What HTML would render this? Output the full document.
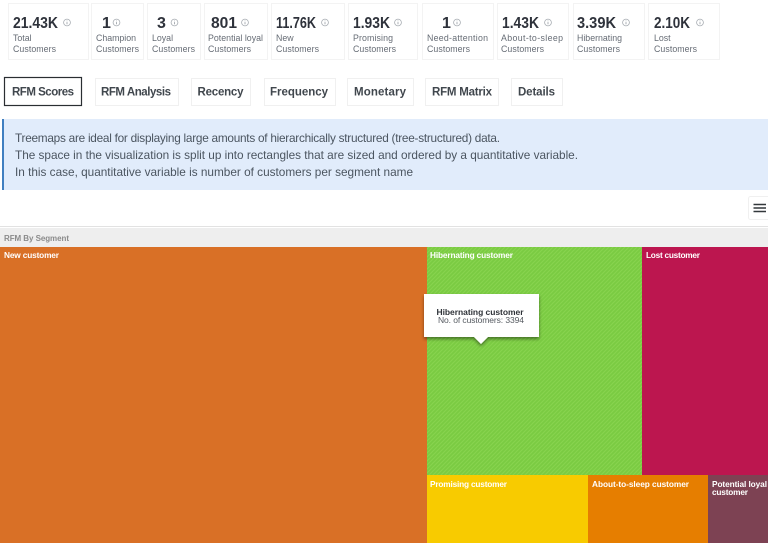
<!DOCTYPE html>
<html lang="en">
<head>
<meta charset="utf-8">
<title>RFM Scores</title>
<style>
html,body{margin:0;padding:0;background:#fff;width:768px;height:543px;overflow:hidden}
svg{display:block}
text{font-family:"Liberation Sans",sans-serif}
.card{fill:#fff;stroke:#f3f3f3;stroke-width:1}
.num{font-size:16px;font-weight:700;fill:#2f333b}
.lab{font-size:8.800px;fill:#666c75}
.btn{fill:#fff;stroke:#f0f0f0;stroke-width:1}
.bt{font-size:11.500px;font-weight:700;fill:#41464e}
.info{font-size:11.800px;fill:#4b5560}
.tm{font-size:8.300px;font-weight:700;fill:#fff}
.ic{fill:none;stroke:#a8adb3;stroke-width:.8}
.id{stroke:#a8adb3;stroke-width:1}
</style>
</head>
<body>
<svg width="768" height="543" viewBox="0 0 768 543" xmlns="http://www.w3.org/2000/svg">
<defs>
<pattern id="h" width="4" height="4" patternUnits="userSpaceOnUse">
<rect width="4" height="4" fill="#7acb42"/>
<path d="M0 4L4 0M-1 1L1 -1M3 5L5 3" stroke="#88d450" stroke-width="1"/>
</pattern>
<filter id="s" x="-10%" y="-10%" width="120%" height="130%"><feDropShadow dx="0" dy="2" stdDeviation="1.500" flood-color="#000" flood-opacity=".45"/></filter>
<filter id="b" x="-5%" y="-5%" width="110%" height="110%"><feGaussianBlur stdDeviation=".35"/></filter>
<g id="i"><circle r="3.400" class="ic"/><path d="M0 -.4V1.800M0 -1.900V-1.200" class="id"/></g>
</defs>

<g filter="url(#b)">
<!-- KPI cards -->
<rect class="card" x="8.500" y="3.500" width="80" height="56"/>
<rect class="card" x="91.500" y="3.500" width="52" height="56"/>
<rect class="card" x="147.500" y="3.500" width="53" height="56"/>
<rect class="card" x="204.500" y="3.500" width="63" height="56"/>
<rect class="card" x="271.500" y="3.500" width="73" height="56"/>
<rect class="card" x="348.500" y="3.500" width="69" height="56"/>
<rect class="card" x="422.500" y="3.500" width="71" height="56"/>
<rect class="card" x="497.500" y="3.500" width="71" height="56"/>
<rect class="card" x="573.500" y="3.500" width="71" height="56"/>
<rect class="card" x="648.500" y="3.500" width="71" height="56"/>

<text class="num" x="13" y="28" textLength="45" lengthAdjust="spacingAndGlyphs">21.43K</text>
<use href="#i" x="67" y="22.500"/>
<text class="lab" x="13" y="41">Total</text><text class="lab" x="13" y="52" textLength="43">Customers</text>

<text class="num" x="102" y="28">1</text>
<use href="#i" x="116.500" y="22.500"/>
<text class="lab" x="96" y="41" textLength="40">Champion</text><text class="lab" x="96" y="52" textLength="43">Customers</text>

<text class="num" x="157" y="28">3</text>
<use href="#i" x="174.500" y="22.500"/>
<text class="lab" x="152" y="41">Loyal</text><text class="lab" x="152" y="52" textLength="43">Customers</text>

<text class="num" x="211" y="28" textLength="26" lengthAdjust="spacingAndGlyphs">801</text>
<use href="#i" x="245" y="22.500"/>
<text class="lab" x="208" y="41" textLength="55">Potential loyal</text><text class="lab" x="208" y="52" textLength="43">Customers</text>

<text class="num" x="276" y="28" textLength="40" lengthAdjust="spacingAndGlyphs">11.76K</text>
<use href="#i" x="325" y="22.500"/>
<text class="lab" x="276" y="41">New</text><text class="lab" x="276" y="52" textLength="43">Customers</text>

<text class="num" x="353" y="28" textLength="37" lengthAdjust="spacingAndGlyphs">1.93K</text>
<use href="#i" x="398" y="22.500"/>
<text class="lab" x="353" y="41" textLength="40">Promising</text><text class="lab" x="353" y="52" textLength="43">Customers</text>

<text class="num" x="442" y="28">1</text>
<use href="#i" x="457" y="22.500"/>
<text class="lab" x="427" y="41" textLength="61">Need-attention</text><text class="lab" x="427" y="52" textLength="43">Customers</text>

<text class="num" x="502" y="28" textLength="37" lengthAdjust="spacingAndGlyphs">1.43K</text>
<use href="#i" x="548" y="22.500"/>
<text class="lab" x="501" y="41" textLength="62">About-to-sleep</text><text class="lab" x="501" y="52" textLength="43">Customers</text>

<text class="num" x="577" y="28" textLength="39" lengthAdjust="spacingAndGlyphs">3.39K</text>
<use href="#i" x="626" y="22.500"/>
<text class="lab" x="577" y="41" textLength="45">Hibernating</text><text class="lab" x="577" y="52" textLength="43">Customers</text>

<text class="num" x="654" y="28" textLength="36" lengthAdjust="spacingAndGlyphs">2.10K</text>
<use href="#i" x="700" y="22.500"/>
<text class="lab" x="654" y="41">Lost</text><text class="lab" x="654" y="52" textLength="43">Customers</text>

<!-- Tabs -->
<rect x="4.500" y="77.500" width="77" height="28" fill="#fff" stroke="#2b2f33" stroke-width="1.200"/>
<text class="bt" x="12" y="95.500" textLength="62">RFM Scores</text>
<rect class="btn" x="95.500" y="78.500" width="83" height="27"/>
<text class="bt" x="101" y="95.500" textLength="70">RFM Analysis</text>
<rect class="btn" x="191.500" y="78.500" width="59" height="27"/>
<text class="bt" x="197.500" y="95.500" textLength="46">Recency</text>
<rect class="btn" x="264.500" y="78.500" width="71" height="27"/>
<text class="bt" x="270" y="95.500" textLength="58">Frequency</text>
<rect class="btn" x="347.500" y="78.500" width="66" height="27"/>
<text class="bt" x="354" y="95.500" textLength="52">Monetary</text>
<rect class="btn" x="425.500" y="78.500" width="73" height="27"/>
<text class="bt" x="432" y="95.500" textLength="60">RFM Matrix</text>
<rect class="btn" x="511.500" y="78.500" width="51" height="27"/>
<text class="bt" x="518" y="95.500" textLength="37">Details</text>

<!-- Info box -->
<rect x="2" y="119" width="766" height="71" fill="#e1ecfb"/>
<rect x="2" y="119" width="2" height="71" fill="#3f7fc0"/>
<text class="info" x="15" y="142" textLength="485">Treemaps are ideal for displaying large amounts of hierarchically structured (tree-structured) data.</text>
<text class="info" x="15" y="159" textLength="563">The space in the visualization is split up into rectangles that are sized and ordered by a quantitative variable.</text>
<text class="info" x="15" y="176" textLength="398">In this case, quantitative variable is number of customers per segment name</text>

<!-- Menu button -->
<rect x="748.500" y="196.500" width="24" height="23" rx="2" fill="#fff" stroke="#f0f0f0"/>
<path d="M753.500 204.500H766M753.500 208H766M753.500 211.500H766" stroke="#33373b" stroke-width="1.400"/>

<!-- Chart header -->
<rect x="0" y="226" width="768" height="1" fill="#e2e2e2"/>
<rect x="0" y="228" width="768" height="19" fill="#eeeeee"/>
<text x="4" y="241" font-size="8" font-weight="700" fill="#8b8b8b" textLength="65">RFM By Segment</text>

<!-- Treemap -->
<rect x="0" y="247" width="427" height="296" fill="#d96f27"/>
<rect x="427" y="247" width="215" height="228" fill="url(#h)"/>
<rect x="642" y="247" width="126" height="228" fill="#bc1850"/>
<rect x="427" y="475" width="161" height="68" fill="#f8cb00"/>
<rect x="588" y="475" width="120" height="68" fill="#e67e00"/>
<rect x="708" y="475" width="60" height="68" fill="#7d4352"/>
<text class="tm" x="4" y="258" textLength="55">New customer</text>
<text class="tm" x="430" y="258" textLength="83">Hibernating customer</text>
<text class="tm" x="646" y="258" textLength="54">Lost customer</text>
<text class="tm" x="430" y="487" textLength="77">Promising customer</text>
<text class="tm" x="592" y="487" textLength="97">About-to-sleep customer</text>
<text class="tm" x="712" y="487" textLength="55">Potential loyal</text>
<text class="tm" x="712" y="495" textLength="36">customer</text>
</g>

<!-- Tooltip -->
<g filter="url(#s)">
<path d="M424 294H539V337H488L481 344L474 337H424Z" fill="#fff"/>
</g>
<g filter="url(#b)">
<text x="436.500" y="315" font-size="8.500" font-weight="700" fill="#2f3338" textLength="87">Hibernating customer</text>
<text x="438" y="323" font-size="8.500" fill="#555a60" textLength="86">No. of customers: 3394</text>
</g>
</svg>
</body>
</html>
